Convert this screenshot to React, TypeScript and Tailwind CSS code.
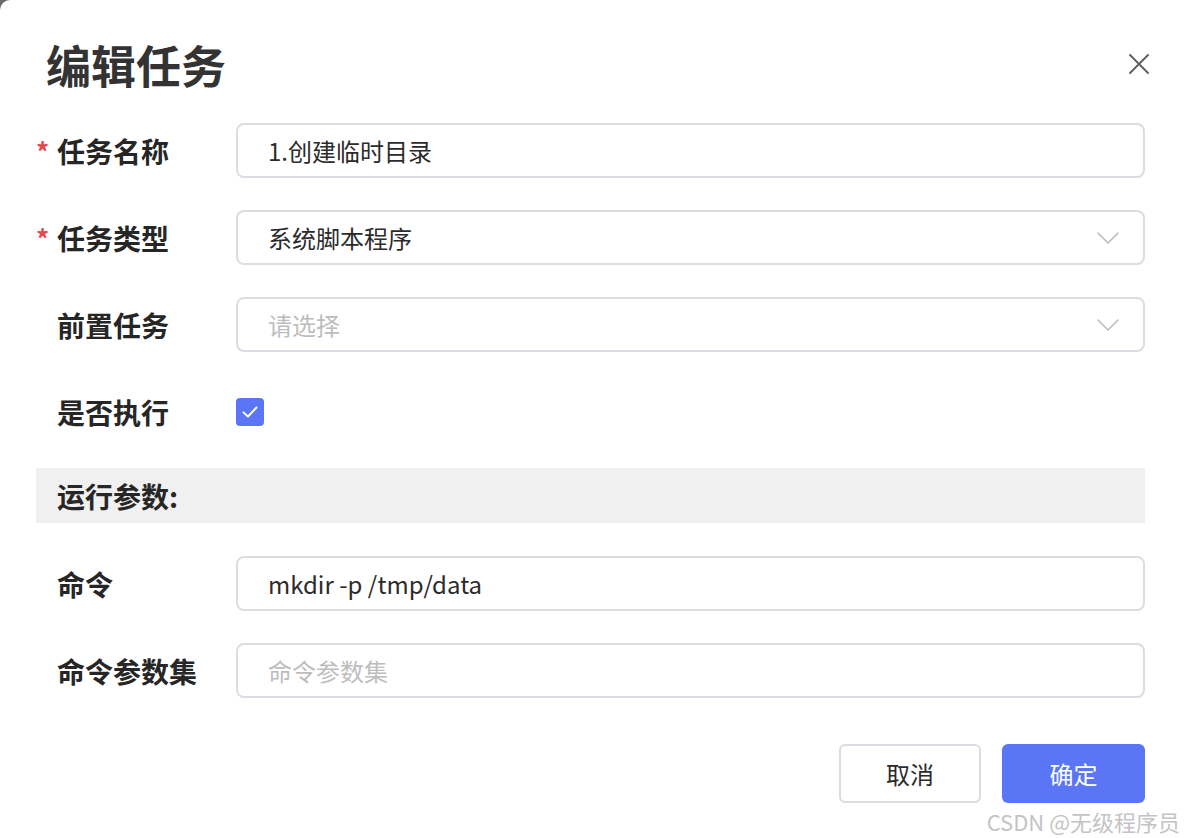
import React from "react";

const FONT = "font-['Microsoft_YaHei','Noto_Sans_CJK_SC',sans-serif]";

function Chevron() {
  return (
    <svg width="22" height="12" viewBox="0 0 22 12" fill="none" className="shrink-0">
      <path d="M1 1l10 10L21 1" stroke="#bdbdbd" strokeWidth="1.6" strokeLinecap="round" strokeLinejoin="round" />
    </svg>
  );
}

function Label({ text, required }: { text: string; required?: boolean }) {
  return (
    <div className="flex w-[200px] shrink-0 items-center">
      <span className="w-[21px] text-[26px] font-bold leading-none text-[#e5484d]">
        {required ? "*" : ""}
      </span>
      <span className="text-[28px] font-bold leading-none text-[#262626]">{text}</span>
    </div>
  );
}

function Field({
  value,
  placeholder,
  select,
}: {
  value?: string;
  placeholder?: string;
  select?: boolean;
}) {
  return (
    <div className="flex h-[55px] flex-1 items-center justify-between rounded-[8px] border-2 border-[#dcdde3] bg-white pl-[30px] pr-[24px]">
      <span
        className={`text-[24px] leading-none ${value ? "text-[#2b2b2b]" : "text-[#bdbdbd]"}`}
      >
        {value || placeholder}
      </span>
      {select && <Chevron />}
    </div>
  );
}

export default function App() {
  return (
    <div className={`h-[838px] w-[1186px] bg-[#6b6b6b] ${FONT}`}>
      <div className="relative flex h-full w-full flex-col rounded-tl-[10px] bg-white pl-[36px] pr-[41px]">
        <div className="flex h-[123px] items-start justify-between">
          <h1 className="pl-[10px] pt-[42px] text-[45px] font-bold leading-none text-[#333]">
            编辑任务
          </h1>
          <button className="mr-[-6px] mt-[52px] p-0">
            <svg width="24" height="24" viewBox="0 0 24 24" fill="none">
              <path d="M3 3l18 18M21 3L3 21" stroke="#606266" strokeWidth="2" strokeLinecap="round" />
            </svg>
          </button>
        </div>

        <div className="flex flex-col gap-[32px]">
          <div className="flex items-center">
            <Label text="任务名称" required />
            <Field value="1.创建临时目录" />
          </div>
          <div className="flex items-center">
            <Label text="任务类型" required />
            <Field value="系统脚本程序" select />
          </div>
          <div className="flex items-center">
            <Label text="前置任务" />
            <Field placeholder="请选择" select />
          </div>
          <div className="flex h-[55px] items-center">
            <Label text="是否执行" />
            <div className="flex h-[28px] w-[28px] items-center justify-center rounded-[4px] bg-[#5a76f6]">
              <svg width="18" height="14" viewBox="0 0 18 14" fill="none">
                <path d="M2.5 7.5l4.5 4L15.5 2.5" stroke="#fff" strokeWidth="2" strokeLinecap="round" strokeLinejoin="round" />
              </svg>
            </div>
          </div>
        </div>

        <div className="mt-[29px] flex h-[55px] items-center bg-[#f0f0f0] pl-[21px]">
          <span className="text-[28px] font-bold leading-none text-[#262626]">运行参数:</span>
        </div>

        <div className="mt-[33px] flex flex-col gap-[32px]">
          <div className="flex items-center">
            <Label text="命令" />
            <Field value="mkdir -p /tmp/data" />
          </div>
          <div className="flex items-center">
            <Label text="命令参数集" />
            <Field placeholder="命令参数集" />
          </div>
        </div>

        <div className="mt-[46px] flex justify-end gap-[21px]">
          <button className="flex h-[59px] w-[142px] items-center justify-center rounded-[6px] border-2 border-[#dcdde3] bg-white text-[24px] text-[#2b2b2b]">
            取消
          </button>
          <button className="flex h-[59px] w-[143px] items-center justify-center rounded-[6px] bg-[#5a76f6] text-[24px] text-white">
            确定
          </button>
        </div>

        <div className="absolute bottom-[6px] right-[6px] text-[22px] leading-none text-[#c4c4c4]">
          CSDN @无级程序员
        </div>
      </div>
    </div>
  );
}
